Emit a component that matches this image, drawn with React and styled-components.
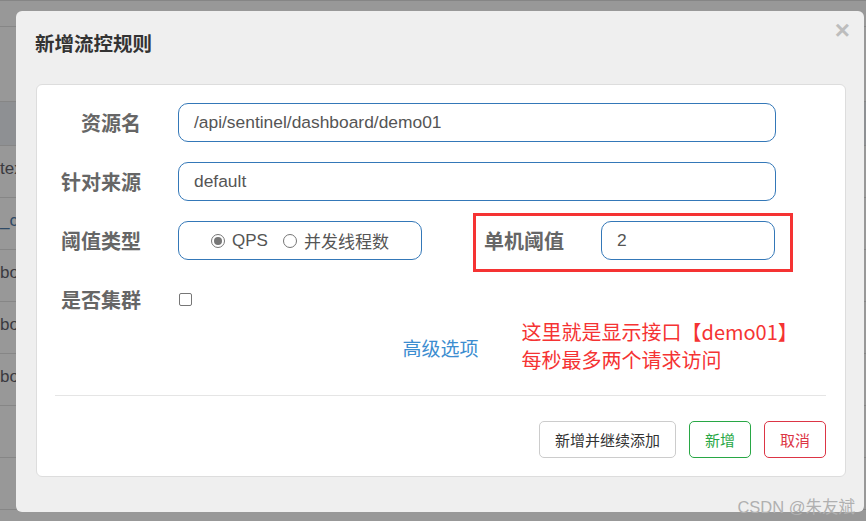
import React from 'react';
import styled, { createGlobalStyle } from 'styled-components';

const GlobalStyle = createGlobalStyle`
	html, body {
		margin: 0;
		padding: 0;
		background: #989898;
	}
	body {
		width: 866px;
		height: 521px;
		overflow: hidden;
		font-family: 'Noto Sans CJK SC', 'Liberation Sans', sans-serif;
	}
	* {
		box-sizing: border-box;
	}
`;

const Page = styled.div`
	position: relative;
	width: 866px;
	height: 521px;
	overflow: hidden;
	background: #989898;
	border-top: 1px solid #858585;
`;

const BgNav = styled.div`
	height: 26px;
	border-bottom: 1px solid #868686;
`;

const BgSpacer = styled.div`
	height: 75px;
	border-bottom: 1px solid #868686;
`;

const BgHead = styled.div`
	height: 44px;
	background: #8e9093;
	border-bottom: 1px solid #868686;
`;

const BgRow = styled.div`
	height: 52px;
	border-bottom: 1px solid #868686;
	display: flex;
	align-items: center;
	padding-bottom: 6px;
	font-family: 'Liberation Sans', sans-serif;
	font-size: 17px;
	color: ${(p) => (p.$link ? '#2f4a66' : '#3a3a40')};
	white-space: nowrap;
`;

const Modal = styled.div`
	position: absolute;
	left: 16px;
	top: 10px;
	width: 848px;
	height: 501px;
	background: #efefef;
	border-radius: 6px;
	display: flex;
	flex-direction: column;
`;

const Header = styled.div`
	height: 63px;
	display: flex;
	align-items: center;
	justify-content: space-between;
	padding: 0 14px 0 19px;
`;

const Title = styled.h4`
	margin: 0;
	font-size: 19.5px;
	font-weight: 700;
	color: #333;
`;

const Close = styled.span`
	align-self: flex-start;
	margin-top: 8px;
	font-family: 'Liberation Sans', sans-serif;
	font-size: 26px;
	line-height: 22px;
	font-weight: 700;
	color: #bdbdbd;
`;

const Card = styled.div`
	margin: 10px 18px 0 20px;
	background: #fff;
	border: 1px solid #dddddd;
	border-radius: 6px;
	padding: 18px 19px 18px 18px;
`;

const Form = styled.div`
	display: flex;
	flex-direction: column;
	gap: 20px;
`;

const Row = styled.div`
	display: flex;
	align-items: center;
	height: 39px;
`;

const Label = styled.label`
	width: ${(p) => p.$width || 86}px;
	flex: none;
	text-align: right;
	margin-right: 37px;
	font-size: 20px;
	font-weight: 700;
	color: #666;
	line-height: 1;
`;

const Input = styled.div`
	width: ${(p) => p.$width}px;
	height: 39px;
	flex: none;
	display: flex;
	align-items: center;
	padding-left: 15px;
	border: 1px solid #3478b8;
	border-radius: 10px;
	font-family: 'Liberation Sans', sans-serif;
	font-size: 17.4px;
	color: #555;
	background: #fff;
`;

const RadioGroup = styled.div`
	width: 244px;
	height: 39px;
	display: flex;
	align-items: center;
	justify-content: center;
	border: 1px solid #3478b8;
	border-radius: 10px;
	font-size: 17px;
	color: #555;
`;

const RadioOption = styled.span`
	display: flex;
	align-items: center;
	gap: 7px;
	margin-right: ${(p) => (p.$last ? 0 : 15)}px;
	font-family: 'Liberation Sans', 'Noto Sans CJK SC', sans-serif;
`;

const RadioDot = styled.span`
	width: 14px;
	height: 14px;
	border-radius: 50%;
	border: 1px solid #767676;
	display: flex;
	align-items: center;
	justify-content: center;
	background: #fff;
	&::after {
		content: '';
		width: 8px;
		height: 8px;
		border-radius: 50%;
		background: ${(p) => (p.$checked ? '#767676' : 'transparent')};
	}
`;

const Mark = styled.div`
	display: flex;
	align-items: center;
	margin: -8px 0 -12px 51px;
	height: 59px;
	padding: 5px 15px 9px 8px;
	border: 3px solid #f53333;
`;

const Checkbox = styled.span`
	width: 13px;
	height: 13px;
	margin-left: 1px;
	border: 1px solid #767676;
	border-radius: 2px;
	background: #fff;
`;

const Advanced = styled.div`
	display: grid;
	grid-template-columns: 1fr auto 1fr;
	align-items: center;
	margin-top: -1px;
	height: 56px;
`;

const Link = styled.a`
	grid-column: 2;
	font-size: 19px;
	color: #3c8dd0;
	margin-top: 3px;
`;

const Note = styled.div`
	grid-column: 3;
	margin-left: 43px;
	font-size: 20px;
	line-height: 28px;
	color: #f53333;
	white-space: nowrap;
`;

const Divider = styled.hr`
	margin: 21px 0 0;
	border: none;
	border-top: 1px solid #e5e5e5;
`;

const Footer = styled.div`
	display: flex;
	justify-content: flex-end;
	gap: 13px;
	margin-top: 25px;
`;

const Button = styled.button`
	height: 37px;
	padding: 0 15px;
	background: #fff;
	border-radius: 5px;
	font-family: 'Noto Sans CJK SC', sans-serif;
	font-size: 15px;
	border: 1px solid ${(p) => p.$border};
	color: ${(p) => p.$color};
`;

const Watermark = styled.span`
	position: absolute;
	right: 11px;
	top: 493px;
	font-family: 'Liberation Sans', 'Noto Sans CJK SC', sans-serif;
	font-size: 16.5px;
	color: #b0b0b0;
`;

const bgRows = [
	{ text: 'tex' },
	{ text: '_c', link: true },
	{ text: 'boa' },
	{ text: 'boa' },
	{ text: 'boa' },
	{ text: '' },
	{ text: '' },
];

export default function App() {
	return (
		<Page>
			<GlobalStyle />
			<BgNav />
			<BgSpacer />
			<BgHead />
			{bgRows.map((r, i) => (
				<BgRow key={i} $link={r.link}>
					{r.text}
				</BgRow>
			))}

			<Modal>
				<Header>
					<Title>新增流控规则</Title>
					<Close>×</Close>
				</Header>
				<Card>
					<Form>
						<Row>
							<Label>资源名</Label>
							<Input $width={598}>/api/sentinel/dashboard/demo01</Input>
						</Row>
						<Row>
							<Label>针对来源</Label>
							<Input $width={598}>default</Input>
						</Row>
						<Row>
							<Label>阈值类型</Label>
							<RadioGroup>
								<RadioOption>
									<RadioDot $checked />
									QPS
								</RadioOption>
								<RadioOption $last>
									<RadioDot />
									并发线程数
								</RadioOption>
							</RadioGroup>
							<Mark>
								<Label $width={80}>单机阈值</Label>
								<Input $width={174}>2</Input>
							</Mark>
						</Row>
						<Row>
							<Label>是否集群</Label>
							<Checkbox />
						</Row>
					</Form>
					<Advanced>
						<Link>高级选项</Link>
						<Note>
							这里就是显示接口【demo01】
							<br />
							每秒最多两个请求访问
						</Note>
					</Advanced>
					<Divider />
					<Footer>
						<Button $border="#cccccc" $color="#333">新增并继续添加</Button>
						<Button $border="#28a745" $color="#28a745">新增</Button>
						<Button $border="#dc3545" $color="#dc3545">取消</Button>
					</Footer>
				</Card>
			</Modal>
			<Watermark>CSDN @朱友斌</Watermark>
		</Page>
	);
}
